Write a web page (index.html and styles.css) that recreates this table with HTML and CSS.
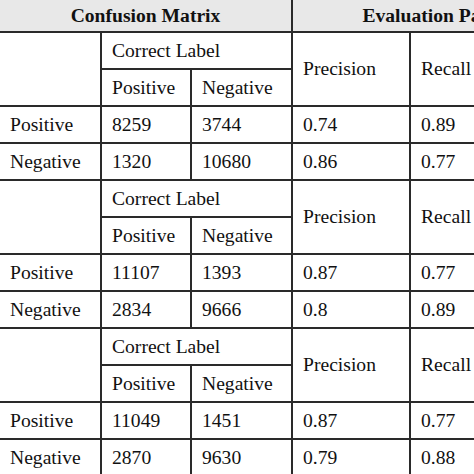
FILE: index.html
```html
<!DOCTYPE html>
<html>
<head>
<meta charset="utf-8">
<link rel="stylesheet" href="styles.css">
</head>
<body>
<div class="frame">
<table class="cm">
<colgroup>
<col class="c1"><col class="c2"><col class="c3"><col class="c4"><col class="c5">
</colgroup>
<thead>
<tr class="head">
<th colspan="3">Confusion Matrix</th>
<th colspan="2">Evaluation Parameters</th>
</tr>
</thead>
<tbody>
<tr><td rowspan="2" class="first"></td><td colspan="2">Correct Label</td><td rowspan="2">Precision</td><td rowspan="2">Recall</td></tr>
<tr><td>Positive</td><td>Negative</td></tr>
<tr><td class="first">Positive</td><td>8259</td><td>3744</td><td>0.74</td><td>0.89</td></tr>
<tr><td class="first">Negative</td><td>1320</td><td>10680</td><td>0.86</td><td>0.77</td></tr>

<tr><td rowspan="2" class="first"></td><td colspan="2">Correct Label</td><td rowspan="2">Precision</td><td rowspan="2">Recall</td></tr>
<tr><td>Positive</td><td>Negative</td></tr>
<tr><td class="first">Positive</td><td>11107</td><td>1393</td><td>0.87</td><td>0.77</td></tr>
<tr><td class="first">Negative</td><td>2834</td><td>9666</td><td>0.8</td><td>0.89</td></tr>

<tr><td rowspan="2" class="first"></td><td colspan="2">Correct Label</td><td rowspan="2">Precision</td><td rowspan="2">Recall</td></tr>
<tr><td>Positive</td><td>Negative</td></tr>
<tr><td class="first">Positive</td><td>11049</td><td>1451</td><td>0.87</td><td>0.77</td></tr>
<tr><td class="first">Negative</td><td>2870</td><td>9630</td><td>0.79</td><td>0.88</td></tr>
</tbody>
</table>
</div>
</body>
</html>
```

FILE: styles.css
```css
html, body {
  margin: 0;
  padding: 0;
  background: #ffffff;
}
.frame {
  width: 474px;
  height: 474px;
  overflow: hidden;
  background: #ffffff;
}
.cm {
  border-collapse: collapse;
  table-layout: fixed;
  width: 625px;
  font-family: "Liberation Serif", "Times New Roman", serif;
  font-size: 19.6px;
  color: #111111;
}
.c1 { width: 101px; }
.c2 { width: 90px; }
.c3 { width: 101px; }
.c4 { width: 118px; }
.c5 { width: 215px; }
.head {
  height: 32px;
  background: #e8e8e8;
}
.head th {
  font-weight: bold;
  text-align: center;
  padding: 0;
  border-left: 2px solid #2a2a2a;
  border-bottom: 2px solid #2a2a2a;
}
.head th:first-child {
  border-left: none;
}
tbody tr {
  height: 37px;
}
tbody td {
  padding: 0 10px;
  text-align: left;
  vertical-align: middle;
  white-space: nowrap;
  border: 2px solid #2a2a2a;
}
tbody td.first {
  border-left: none;
}
```
